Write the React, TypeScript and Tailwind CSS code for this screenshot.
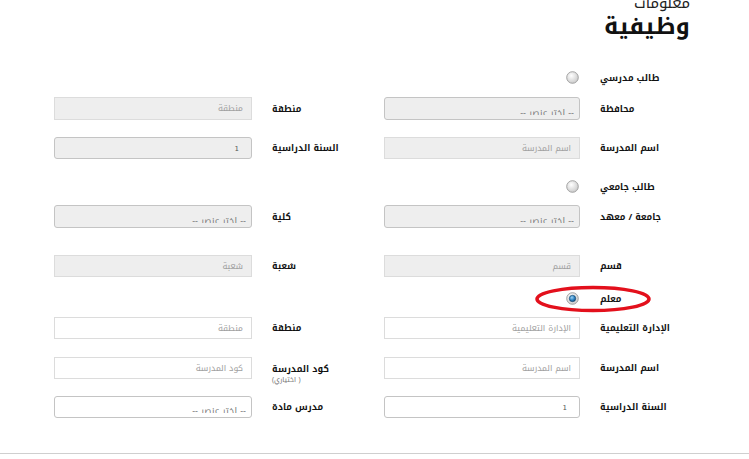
import React from "react";

const FONT = { fontFamily: '"Noto Kufi Arabic","Noto Sans Arabic","DejaVu Sans",sans-serif' };

function Radio({ checked }: { checked?: boolean }) {
  return (
    <svg width="13" height="13" viewBox="0 0 13 13">
      <defs>
        <radialGradient id={checked ? "rg1" : "rg0"} cx="40%" cy="35%" r="70%">
          <stop offset="0%" stopColor="#ffffff" />
          <stop offset="100%" stopColor="#c8c8c8" />
        </radialGradient>
        <radialGradient id="blue" cx="40%" cy="35%" r="70%">
          <stop offset="0%" stopColor="#9fd4f5" />
          <stop offset="60%" stopColor="#2a7fc0" />
          <stop offset="100%" stopColor="#134e7a" />
        </radialGradient>
      </defs>
      <circle cx="6.5" cy="6.5" r="5.8" fill={`url(#${checked ? "rg1" : "rg0"})`} stroke="#9a9a9a" strokeWidth="0.9" />
      {checked && <circle cx="6.5" cy="6.5" r="3.2" fill="url(#blue)" stroke="#0e3f66" strokeWidth="0.6" />}
    </svg>
  );
}

type FieldProps = {
  kind: "input" | "select";
  text?: string;
  value?: string;
  disabled?: boolean;
  w: string;
};

function Field({ kind, text, value, disabled, w }: FieldProps) {
  const bg = disabled ? "bg-[#eeeeee]" : "bg-white";
  const shape =
    kind === "select"
      ? "rounded-[3px] border border-[#c4c4c4]"
      : "border border-[#dcdcdc]";
  if (kind === "select" && !value) {
    return (
      <div className={`${w} h-full ${bg} ${shape} flex items-end justify-end pr-[5px] pb-[4px]`}>
        <div className="h-[8px] overflow-hidden">
          <div dir="rtl" className="text-[9px] leading-[12px] text-[#777] whitespace-nowrap" style={FONT}>
            -- اختر عنصر --
          </div>
        </div>
      </div>
    );
  }
  if (value) {
    return (
      <div className={`${w} h-full ${bg} ${shape} flex items-center justify-end pr-[12px] pt-[3px]`}>
        <span className="text-[7px] text-[#555]" style={{ fontFamily: '"DejaVu Sans",sans-serif' }}>{value}</span>
      </div>
    );
  }
  return (
    <div className={`${w} h-full ${bg} ${shape} flex items-center justify-end pr-[8px]`}>
      <span dir="rtl" className="text-[8.5px] text-[#a0a0a0] whitespace-nowrap" style={FONT}>{text}</span>
    </div>
  );
}

function Label({ children, sub }: { children: React.ReactNode; sub?: string }) {
  return (
    <div dir="rtl" className={`text-left ${sub ? "mt-[10px]" : ""}`} style={FONT}>
      <div className="text-[9px] font-bold text-[#111] leading-[12px] whitespace-nowrap">{children}</div>
      {sub && <div className="text-[7px] text-[#777] leading-[7px] mt-[1px] whitespace-nowrap">{sub}</div>}
    </div>
  );
}

function Row({
  h,
  mt,
  left,
  leftLabel,
  right,
  rightLabel,
  leftSub,
}: {
  h: string;
  mt: string;
  left: React.ReactNode;
  leftLabel: string;
  right: React.ReactNode;
  rightLabel: string;
  leftSub?: string;
}) {
  return (
    <div className={`flex items-center ${h} ${mt}`}>
      <div className="ml-[54px] h-full flex">{left}</div>
      <div className="w-[132px] pl-[20px] flex items-center h-full">
        <Label sub={leftSub}>{leftLabel}</Label>
      </div>
      <div className="h-full flex">{right}</div>
      <div className="pl-[20px] flex items-center h-full">
        <Label>{rightLabel}</Label>
      </div>
    </div>
  );
}

function RadioRow({ mt, label, checked }: { mt: string; label: string; checked?: boolean }) {
  return (
    <div className={`flex items-center h-[13px] ${mt}`}>
      <div className="ml-[384px] w-[196px] flex justify-end pr-[1px]">
        <Radio checked={checked} />
      </div>
      <div className="pl-[20px]">
        <Label>{label}</Label>
      </div>
    </div>
  );
}

export default function App() {
  return (
    <div className="relative w-[749px] h-[459px] bg-white overflow-hidden">
      <div dir="rtl" className="pr-[59px] mt-[-5px]" style={FONT}>
        <div className="text-[15px] leading-[16px] text-[#222]">معلومات</div>
        <div className="text-[23px] font-bold leading-[32px] text-[#111]">وظيفية</div>
      </div>

      <div className="absolute left-0 top-[70px] w-full flex flex-col">
        <RadioRow mt="mt-[1px]" label="طالب مدرسي" />
        <Row
          h="h-[23px]"
          mt="mt-[13px]"
          left={<Field kind="input" text="منطقة" disabled w="w-[198px]" />}
          leftLabel="منطقة"
          right={<Field kind="select" disabled w="w-[196px]" />}
          rightLabel="محافظة"
        />
        <Row
          h="h-[22px]"
          mt="mt-[17px]"
          left={<Field kind="select" value="1" disabled w="w-[198px]" />}
          leftLabel="السنة الدراسية"
          right={<Field kind="input" text="اسم المدرسة" disabled w="w-[196px]" />}
          rightLabel="اسم المدرسة"
        />
        <RadioRow mt="mt-[21px]" label="طالب جامعي" />
        <Row
          h="h-[23px]"
          mt="mt-[12px]"
          left={<Field kind="select" disabled w="w-[198px]" />}
          leftLabel="كلية"
          right={<Field kind="select" disabled w="w-[196px]" />}
          rightLabel="جامعة / معهد"
        />
        <Row
          h="h-[22px]"
          mt="mt-[27px]"
          left={<Field kind="input" text="شعبة" disabled w="w-[198px]" />}
          leftLabel="شعبة"
          right={<Field kind="input" text="قسم" disabled w="w-[196px]" />}
          rightLabel="قسم"
        />
        <RadioRow mt="mt-[15px]" label="معلم" checked />
        <Row
          h="h-[22px]"
          mt="mt-[12px]"
          left={<Field kind="input" text="منطقة" w="w-[198px]" />}
          leftLabel="منطقة"
          right={<Field kind="input" text="الإدارة التعليمية" w="w-[196px]" />}
          rightLabel="الإدارة التعليمية"
        />
        <Row
          h="h-[22px]"
          mt="mt-[18px]"
          left={<Field kind="input" text="كود المدرسة" w="w-[198px]" />}
          leftLabel="كود المدرسة"
          leftSub="( اختياري)"
          right={<Field kind="input" text="اسم المدرسة" w="w-[196px]" />}
          rightLabel="اسم المدرسة"
        />
        <Row
          h="h-[22px]"
          mt="mt-[17px]"
          left={<Field kind="select" w="w-[198px]" />}
          leftLabel="مدرس مادة"
          right={<Field kind="select" value="1" w="w-[196px]" />}
          rightLabel="السنة الدراسية"
        />
      </div>

      <div className="absolute left-0 top-[453px] w-full h-[1px] bg-[#cfcfcf]" />

      <svg className="absolute left-[534px] top-[284px]" width="120" height="30" viewBox="0 0 120 30">
        <ellipse cx="59" cy="15" rx="56" ry="11.5" fill="none" stroke="#e3101c" strokeWidth="3.5" />
      </svg>
    </div>
  );
}
